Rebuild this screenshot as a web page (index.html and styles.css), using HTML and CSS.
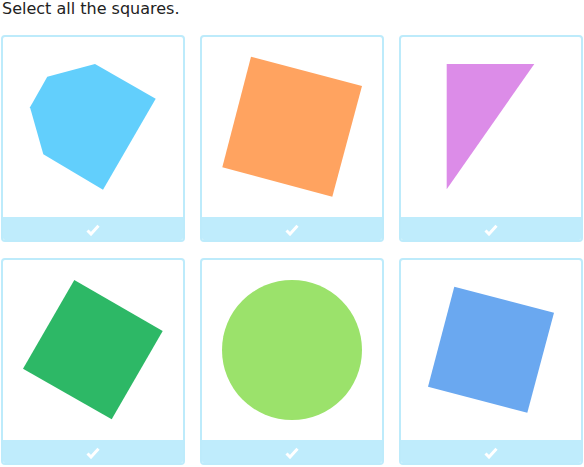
FILE: index.html
```html
<!DOCTYPE html>
<html>
<head>
<meta charset="utf-8">
<link rel="stylesheet" href="styles.css">
</head>
<body>
<div class="prompt">Select all the squares.</div>
<div class="grid">
  <div class="card">
    <svg class="shape" viewBox="3 37 180 180"><polygon fill="#62cffc" points="95,64 155.7,98.7 103,189.7 43.3,154.3 30,107.3 47.3,76.7"/></svg>
    <div class="foot"><svg class="check" viewBox="0 0 14 12"><path d="M1.5 6.5 L5 10 L12.5 1.8" fill="none" stroke="#fff" stroke-width="3"/></svg></div>
  </div>
  <div class="card">
    <svg class="shape" viewBox="202 37 180 180"><polygon fill="#ffa360" points="251,56.7 362,86 332.3,196.7 222.3,167.3"/></svg>
    <div class="foot"><svg class="check" viewBox="0 0 14 12"><path d="M1.5 6.5 L5 10 L12.5 1.8" fill="none" stroke="#fff" stroke-width="3"/></svg></div>
  </div>
  <div class="card">
    <svg class="shape" viewBox="401 37 180 180"><polygon fill="#dc8ce8" points="446.7,64 534.3,64 446.7,189.3"/></svg>
    <div class="foot"><svg class="check" viewBox="0 0 14 12"><path d="M1.5 6.5 L5 10 L12.5 1.8" fill="none" stroke="#fff" stroke-width="3"/></svg></div>
  </div>
  <div class="card">
    <svg class="shape" viewBox="3 260 180 180"><polygon fill="#2db866" points="74.3,280 162.7,331 111.7,419.3 23,368.7"/></svg>
    <div class="foot"><svg class="check" viewBox="0 0 14 12"><path d="M1.5 6.5 L5 10 L12.5 1.8" fill="none" stroke="#fff" stroke-width="3"/></svg></div>
  </div>
  <div class="card">
    <svg class="shape" viewBox="202 260 180 180"><circle fill="#9be26b" cx="292" cy="350" r="70"/></svg>
    <div class="foot"><svg class="check" viewBox="0 0 14 12"><path d="M1.5 6.5 L5 10 L12.5 1.8" fill="none" stroke="#fff" stroke-width="3"/></svg></div>
  </div>
  <div class="card">
    <svg class="shape" viewBox="401 260 180 180"><polygon fill="#6aa8f0" points="454.3,286.7 554,312.7 527.3,412.7 428,386.7"/></svg>
    <div class="foot"><svg class="check" viewBox="0 0 14 12"><path d="M1.5 6.5 L5 10 L12.5 1.8" fill="none" stroke="#fff" stroke-width="3"/></svg></div>
  </div>
</div>
</body>
</html>
```
FILE: styles.css
```css
html, body {
  margin: 0;
  padding: 0;
  background: #fff;
}
body {
  width: 584px;
  height: 467px;
  overflow: hidden;
  font-family: "DejaVu Sans", Verdana, sans-serif;
}
.prompt {
  font-size: 16px;
  line-height: 18px;
  color: #222;
  padding-left: 2px;
  height: 35px;
  box-sizing: border-box;
}
.grid {
  display: grid;
  grid-template-columns: repeat(3, 184px);
  grid-auto-rows: 207px;
  column-gap: 15px;
  row-gap: 16px;
  padding-left: 1px;
}
.card {
  border: 2px solid #bdebfb;
  border-radius: 4px;
  display: flex;
  flex-direction: column;
  overflow: hidden;
  background: #fff;
}
.shape {
  display: block;
  width: 180px;
  height: 180px;
  flex: none;
}
.foot {
  flex: 1;
  background: #bfecfc;
  display: flex;
  align-items: center;
  justify-content: center;
}
.check {
  width: 14px;
  height: 12px;
  display: block;
  margin-top: 2px;
}
```
